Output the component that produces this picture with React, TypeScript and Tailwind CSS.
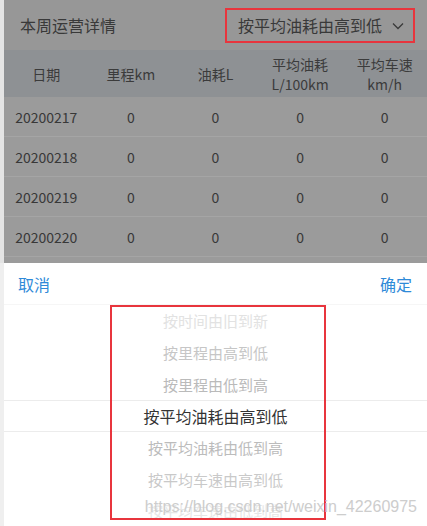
import React from 'react';

const ROWS = ['20200217', '20200218', '20200219', '20200220'];

const OPTIONS = [
  { label: '按时间由旧到新', color: 'text-[#e2e2e2]' },
  { label: '按里程由高到低', color: 'text-[#c6c6c6]' },
  { label: '按里程由低到高', color: 'text-[#bababa]' },
  { label: '按平均油耗由高到低', color: 'text-[#333333]', active: true },
  { label: '按平均油耗由低到高', color: 'text-[#bcbcbc]' },
  { label: '按平均车速由高到低', color: 'text-[#c9c9c9]' },
  { label: '按平均车速由低到高', color: 'text-[#e6e6e6]' },
];

export default function App() {
  return (
    <div
      className="relative w-[427px] h-[526px] overflow-hidden bg-white"
      style={{ fontFamily: '"Noto Sans CJK SC", "Noto Sans", sans-serif' }}
    >
      {/* page behind the popup, dimmed by the overlay */}
      <div className="h-[263px] overflow-hidden bg-[#9b9b9b] border-l-4 border-[#e4e4e4]">
        <div className="h-[50px] flex items-center justify-between pl-4 pr-3 bg-[#979797]">
          <span className="text-[16px] leading-none text-[#393939]">本周运营详情</span>
          <div className="h-[35px] flex items-center gap-[10px] pl-[11px] pr-[9px] border-2 border-[#e8353d]">
            <span className="text-[16px] leading-none text-[#393939]">按平均油耗由高到低</span>
            <svg width="12" height="8" viewBox="0 0 12 8" className="mt-[2px]">
              <polyline points="1,1.5 6,6.5 11,1.5" fill="none" stroke="#3a3a3a" strokeWidth="1.3" />
            </svg>
          </div>
        </div>

        <div className="h-[47px] grid grid-cols-5 items-center bg-[#8e9194] text-[14px] leading-[20px] text-[#3b3b3b] text-center">
          <span>日期</span>
          <span>里程km</span>
          <span>油耗L</span>
          <span>平均油耗<br />L/100km</span>
          <span>平均车速<br />km/h</span>
        </div>

        {ROWS.map((d) => (
          <div
            key={d}
            className="h-[40px] grid grid-cols-5 items-center border-b border-[#a5a5a5] text-[14px] leading-none text-[#383838] text-center"
          >
            <span>{d}</span>
            <span>0</span>
            <span>0</span>
            <span>0</span>
            <span>0</span>
          </div>
        ))}
      </div>

      {/* picker popup */}
      <div className="h-[263px] bg-white border-l-4 border-[#efefef]">
        <div className="h-[42px] flex items-center justify-between pl-[14px] pr-[15px] border-b border-[#f6f6f6] text-[16px] leading-none text-[#2f8ad8]">
          <span>取消</span>
          <span>确定</span>
        </div>
        <div className="flex flex-col">
          {OPTIONS.map((o) => (
            <div
              key={o.label}
              className={
                o.active
                  ? 'h-[31.7px] flex items-center justify-center border-y border-[#ececec] text-[16px] leading-none ' + o.color
                  : 'h-[31.7px] flex items-center justify-center text-[15px] leading-none ' + o.color
              }
            >
              {o.label}
            </div>
          ))}
        </div>
      </div>

      {/* annotation box round the picker column */}
      <div className="absolute left-[110px] top-[305px] w-[216px] h-[215px] border-2 border-[#e8353d]" />

      {/* watermark */}
      <div
        className="absolute right-[10px] top-[499px] text-[16px] leading-none text-[#cdcdcd]"
        style={{ fontFamily: '"Liberation Sans", Arial, sans-serif' }}
      >
        https://blog.csdn.net/weixin_42260975
      </div>
    </div>
  );
}
